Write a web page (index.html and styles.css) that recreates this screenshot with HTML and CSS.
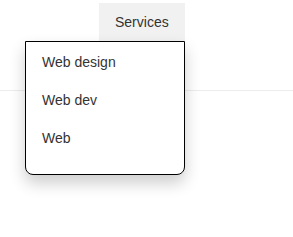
FILE: index.html
```html
<!DOCTYPE html>
<html>
<head>
<meta charset="utf-8">
<link rel="stylesheet" href="styles.css">
</head>
<body>
<header class="header">
  <nav class="nav">
    <div class="menu">
      <div class="menu-btn">Services</div>
      <div class="dropdown">
        <a class="item" href="#">Web design</a>
        <a class="item" href="#">Web dev</a>
        <a class="item" href="#">Web</a>
      </div>
    </div>
  </nav>
</header>
<main class="page"></main>
</body>
</html>
```
FILE: styles.css
```css
html, body {
  margin: 0;
  padding: 0;
  background: #fff;
  font-family: "Liberation Sans", Arial, sans-serif;
  font-size: 14px;
  color: #333;
}
body {
  min-height: 237px;
}
.header {
  height: 90px;
  border-bottom: 1px solid #ececec;
}
.page {
  height: 146px;
}
.nav {
  display: flex;
  padding: 3px 0 0 99px;
}
.menu {
  position: relative;
}
.menu-btn {
  background: #f1f1f1;
  padding: 12px 16px;
  line-height: 14px;
  width: 54px;
}
.dropdown {
  position: absolute;
  top: 38px;
  right: 0;
  width: 158px;
  background: #fff;
  border: 1px solid #000;
  border-radius: 0 0 8px 8px;
  box-shadow: 0 8px 16px rgba(0, 0, 0, 0.2);
  padding-bottom: 18px;
  display: flex;
  flex-direction: column;
  z-index: 2;
}
.item {
  display: block;
  padding: 13px 16px 11px;
  line-height: 14px;
  color: #333;
  text-decoration: none;
}
```
